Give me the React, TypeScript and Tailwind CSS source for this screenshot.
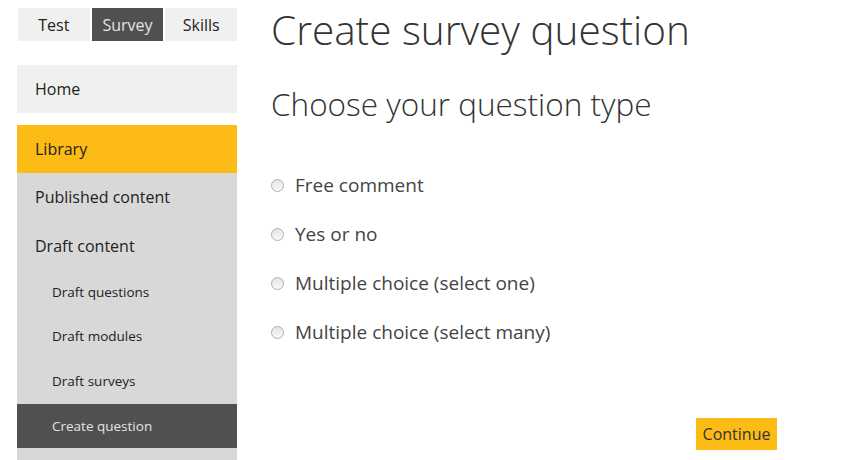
import React from 'react';

const font = { fontFamily: '"Open Sans", "Liberation Sans", sans-serif' };

const tabs = ['Test', 'Survey', 'Skills'];
const options = [
  'Free comment',
  'Yes or no',
  'Multiple choice (select one)',
  'Multiple choice (select many)',
];

const App: React.FC = () => {
  return (
    <div className="flex h-[460px] w-[855px] overflow-hidden bg-white text-[#222]" style={font}>
      {/* Sidebar */}
      <div className="flex w-[220px] shrink-0 flex-col ml-[17px]">
        <div className="mt-2 flex gap-[2px] pl-px">
          {tabs.map((t) => (
            <div
              key={t}
              className={
                t === 'Survey'
                  ? 'flex h-[33px] flex-1 items-center justify-center bg-[#505050] text-[16px] text-[#e4e4e4]'
                  : 'flex h-[33px] flex-1 items-center justify-center bg-[#f0f0ef] text-[16px] text-[#222]'
              }
            >
              {t}
            </div>
          ))}
        </div>

        <div className="mt-6 flex h-12 items-center bg-[#f0f0ef] pl-[18px] text-[16px]">Home</div>

        <div className="mt-3 flex h-12 items-center bg-[#fdbb16] pl-[18px] text-[16px]">Library</div>

        <div className="flex flex-1 flex-col bg-[#d8d8d8]">
          <div className="flex h-12 items-center pl-[18px] text-[16px]">Published content</div>
          <div className="flex h-[49px] pt-px items-center pl-[18px] text-[16px]">Draft content</div>
          <div className="flex h-[44px] items-center pl-[35px] text-[13.5px]">Draft questions</div>
          <div className="flex h-[45px] items-center pl-[35px] text-[13.5px]">Draft modules</div>
          <div className="flex h-[45px] items-center pl-[35px] text-[13.5px]">Draft surveys</div>
          <div className="flex h-[44px] items-center bg-[#505050] pl-[35px] text-[13.5px] text-[#e4e4e4]">
            Create question
          </div>
        </div>
      </div>

      {/* Main */}
      <div className="ml-[34px] flex flex-1 flex-col pr-[78px]">
        <h1 className="mt-[6px] text-[40.5px] font-light leading-[48px] text-[#333]">Create survey question</h1>
        <h2 className="mt-[30px] text-[31.5px] font-light leading-[40px] text-[#333]">Choose your question type</h2>

        <div className="mt-[49px] flex flex-col gap-[25px]">
          {options.map((o) => (
            <label key={o} className="flex h-6 items-center gap-[11px] text-[19px] text-[#444]">
              <span className="h-[13px] w-[13px] rounded-full border border-[#b0b0b0] bg-gradient-to-b from-[#e4e4e4] to-[#fafafa]" />
              {o}
            </label>
          ))}
        </div>

        <div className="mt-auto mb-[10px] flex justify-end">
          <button className="h-[32px] w-[81px] bg-[#fdbb16] text-[16px] text-[#333]">Continue</button>
        </div>
      </div>
    </div>
  );
};

export default App;
